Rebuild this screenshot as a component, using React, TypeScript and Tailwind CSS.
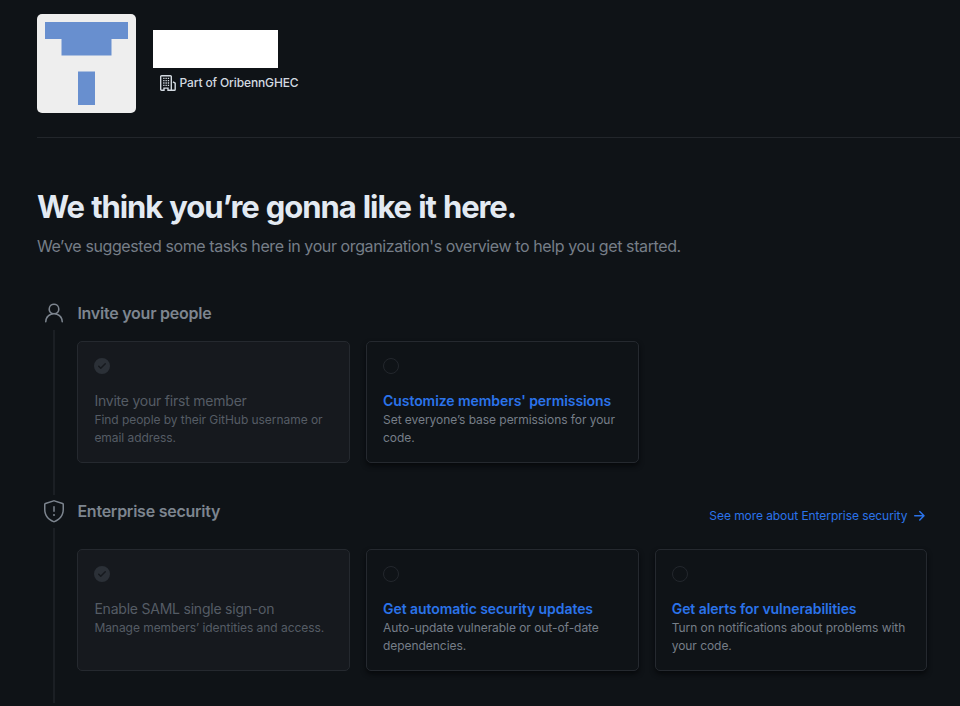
import type { ReactNode } from "react";

function BuildingIcon() {
  return (
    <svg width="16" height="16" viewBox="0 0 16 16" fill="none" stroke="currentColor" className="shrink-0">
      <path strokeWidth="1.4" d="M4 15.3H1.6a.9.9 0 0 1-.9-.9V1.6a.9.9 0 0 1 .9-.9h8.8a.9.9 0 0 1 .9.9v13.7H8v-2.2H4v2.2ZM11.3 15.3h3a.9.9 0 0 0 .9-.9V8.2L13 6.8" />
      <path strokeWidth="1.3" strokeDasharray="1.3 1" d="M3.2 3.4h5.9M3.2 5.7h5.9M3.2 8h5.9M3.2 10.3h5.9" />
    </svg>
  );
}

function PersonIcon() {
  return (
    <svg width="24" height="24" viewBox="0 0 24 24" fill="currentColor">
      <path d="M12 2.5a5.5 5.5 0 0 1 3.096 10.047 9.005 9.005 0 0 1 5.9 8.181.75.75 0 1 1-1.499.044 7.5 7.5 0 0 0-14.993 0 .75.75 0 0 1-1.5-.045 9.005 9.005 0 0 1 5.9-8.18A5.5 5.5 0 0 1 12 2.5ZM8 8a4 4 0 1 0 8 0 4 4 0 0 0-8 0Z" />
    </svg>
  );
}

function ShieldIcon() {
  return (
    <svg width="24" height="24" viewBox="0 0 24 24" fill="currentColor">
      <path d="M12.077 2.563a.25.25 0 0 0-.154 0L3.673 5.24a.249.249 0 0 0-.173.237V10.5c0 5.461 3.28 9.483 8.43 11.426a.2.2 0 0 0 .14 0c5.15-1.943 8.43-5.965 8.43-11.426V5.476a.25.25 0 0 0-.173-.237l-8.25-2.676Zm-.617-1.426a1.75 1.75 0 0 1 1.08 0l8.25 2.675A1.75 1.75 0 0 1 22 5.476V10.5c0 6.19-3.77 10.705-9.401 12.83a1.699 1.699 0 0 1-1.198 0C5.771 21.204 2 16.69 2 10.5V5.476c0-.76.49-1.43 1.21-1.664l8.25-2.675ZM13 16a1 1 0 1 1-2 0 1 1 0 0 1 2 0Zm-.25-8.25a.75.75 0 0 0-1.5 0v4.5a.75.75 0 0 0 1.5 0v-4.5Z" />
    </svg>
  );
}

function CheckIcon() {
  return (
    <svg width="16" height="16" viewBox="0 0 16 16" fill="currentColor" className="text-[#2b3037]">
      <path d="M8 16A8 8 0 1 1 8 0a8 8 0 0 1 0 16Zm3.78-9.72a.751.751 0 0 0-.018-1.042.751.751 0 0 0-1.042-.018L6.75 9.19 5.28 7.72a.751.751 0 0 0-1.042.018.751.751 0 0 0-.018 1.042l2 2a.75.75 0 0 0 1.06 0Z" />
    </svg>
  );
}

function ArrowIcon() {
  return (
    <svg width="16" height="16" viewBox="0 0 16 16" fill="currentColor">
      <path d="M8.22 2.97a.75.75 0 0 1 1.06 0l4.25 4.25a.75.75 0 0 1 0 1.06l-4.25 4.25a.751.751 0 0 1-1.042-.018.751.751 0 0 1-.018-1.042l2.97-2.97H3.75a.75.75 0 0 1 0-1.5h7.44L8.22 4.03a.75.75 0 0 1 0-1.06Z" />
    </svg>
  );
}

type Task = { title: string; lines: string[]; done?: boolean };

function TaskCard({ title, lines, done }: Task) {
  return (
    <div
      className={
        done
          ? "h-[122px] rounded-[5px] border border-[#25292f] bg-[#16191e] px-4 pt-4 text-[#555c65]"
          : "h-[122px] rounded-[5px] border border-[#25292f] bg-[#0f1317] px-4 pt-4 text-[#767e88] shadow-[0_3px_5px_#07090c]"
      }
    >
      {done ? <CheckIcon /> : <div className="size-4 rounded-full border-[1.5px] border-[#23272d]" />}
      <h3
        className={
          done
            ? "mt-[17px] whitespace-nowrap text-[14px] leading-[20px] tracking-[-0.22px]"
            : "mt-[17px] whitespace-nowrap text-[14px] font-semibold leading-[20px] tracking-[-0.07px] text-[#2b73ea]"
        }
      >
        {title}
      </h3>
      <p className="text-[12px] leading-[18px] tracking-[-0.05px]">
        {lines.map((line) => (
          <span key={line} className="block whitespace-nowrap">
            {line}
          </span>
        ))}
      </p>
    </div>
  );
}

function Section({ icon, title, link, tasks, className }: { icon: ReactNode; title: string; link?: string; tasks: Task[]; className: string }) {
  return (
    <section className={`flex text-[#7d858f] ${className}`}>
      <div className="flex w-[24px] flex-col items-center">
        {icon}
        <div className="mt-[5px] w-[2px] flex-1 bg-[#1b1f24]" />
      </div>
      <div className="ml-[11.9px] w-[850px]">
        <div className="flex justify-between">
          <h2 className="text-[16px] font-semibold leading-[24px] tracking-[-0.24px]">{title}</h2>
          {link && (
            <a className="mt-[9px] flex h-4 items-center gap-[4px] text-[12px] tracking-[-0.07px] text-[#2b73ea]">
              <span>{link}</span>
              <ArrowIcon />
            </a>
          )}
        </div>
        <div className={link ? "mt-[25px] grid grid-cols-3 gap-4" : "mt-4 grid grid-cols-3 gap-4"}>
          {tasks.map((task) => (
            <TaskCard key={task.title} {...task} />
          ))}
        </div>
      </div>
    </section>
  );
}

export default function App() {
  return (
    <main className="h-[706px] w-[960px] overflow-hidden bg-[#0f1317] pl-[37px] pt-[14px] font-['Inter',sans-serif]">
      <header className="flex h-[124px] border-b border-[#22262b]">
        <svg width="99" height="99" viewBox="0 0 99 99">
          <rect width="99" height="99" rx="5" fill="#eeeeee" />
          <path d="M8 8h83v17H74.5v16.5h-50V25H8zM41 57.5h17V91H41z" fill="#688fcf" />
        </svg>
        <div className="ml-[17px] mt-4">
          <div className="h-[37.5px] w-[125px] bg-white" />
          <div className="ml-[7px] mt-[7.5px] flex items-center gap-[3.5px] text-[12px] font-medium leading-4 tracking-[-0.13px] text-[#d3dae1]">
            <BuildingIcon />
            <span className="whitespace-nowrap">Part of OribennGHEC</span>
          </div>
        </div>
      </header>
      <h1 className="mt-[45px] whitespace-nowrap text-[31px] font-bold leading-[48px] tracking-[-1.1px] [word-spacing:1px] text-[#e3eaf2]">
        We think you’re gonna like it here.
      </h1>
      <p className="mt-[3px] whitespace-nowrap text-[16px] leading-[24px] tracking-[-0.4px] text-[#767e88]">
        We’ve suggested some tasks here in your organization's overview to help you get started.
      </p>
      <Section
        className="ml-[4.5px] mt-[43px] h-[194px]"
        icon={<PersonIcon />}
        title="Invite your people"
        tasks={[
          { title: "Invite your first member", lines: ["Find people by their GitHub username or", "email address."], done: true },
          { title: "Customize members' permissions", lines: ["Set everyone’s base permissions for your", "code."] },
        ]}
      />
      <Section
        className="ml-[4.5px] mt-[4px] h-[204px]"
        icon={<ShieldIcon />}
        title="Enterprise security"
        link="See more about Enterprise security"
        tasks={[
          { title: "Enable SAML single sign-on", lines: ["Manage members’ identities and access."], done: true },
          { title: "Get automatic security updates", lines: ["Auto-update vulnerable or out-of-date", "dependencies."] },
          { title: "Get alerts for vulnerabilities", lines: ["Turn on notifications about problems with", "your code."] },
        ]}
      />
    </main>
  );
}
